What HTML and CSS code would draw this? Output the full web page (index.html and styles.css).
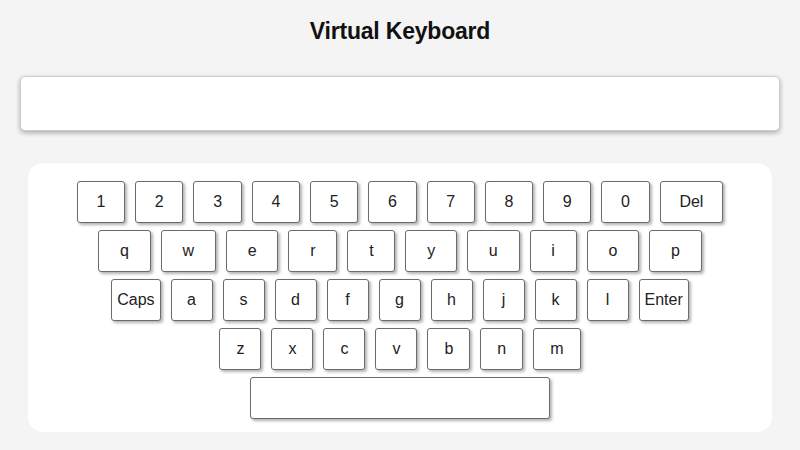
FILE: index.html
```html
<!DOCTYPE html>
<html lang="en">
<head>
  <meta charset="UTF-8" />
  <meta name="viewport" content="width=device-width, initial-scale=1" />
  <title>Virtual Keyboard</title>
  <link rel="stylesheet" href="styles.css">
</head>
<body>

<h1>Virtual Keyboard</h1>

<textarea id="output" class="output" readonly></textarea>

<div class="keyboard">
  <div class="row row-digits">
    <button class="key">1</button>
    <button class="key">2</button>
    <button class="key">3</button>
    <button class="key">4</button>
    <button class="key">5</button>
    <button class="key">6</button>
    <button class="key">7</button>
    <button class="key">8</button>
    <button class="key">9</button>
    <button class="key">0</button>
    <button class="key" data-action="del">Del</button>
  </div>
  <div class="row row-top">
    <button class="key">q</button>
    <button class="key">w</button>
    <button class="key">e</button>
    <button class="key">r</button>
    <button class="key">t</button>
    <button class="key">y</button>
    <button class="key">u</button>
    <button class="key">i</button>
    <button class="key">o</button>
    <button class="key">p</button>
  </div>
  <div class="row row-home">
    <button class="key" data-action="caps">Caps</button>
    <button class="key">a</button>
    <button class="key">s</button>
    <button class="key">d</button>
    <button class="key">f</button>
    <button class="key">g</button>
    <button class="key">h</button>
    <button class="key">j</button>
    <button class="key">k</button>
    <button class="key">l</button>
    <button class="key" data-action="enter">Enter</button>
  </div>
  <div class="row row-bottom">
    <button class="key">z</button>
    <button class="key">x</button>
    <button class="key">c</button>
    <button class="key">v</button>
    <button class="key">b</button>
    <button class="key">n</button>
    <button class="key">m</button>
  </div>
  <div class="row">
    <button class="key space" data-action="space"></button>
  </div>
</div>

<script>
  const output = document.getElementById("output");
  let caps = false;

  document.querySelectorAll(".key").forEach(key => {
    key.addEventListener("click", () => {
      const action = key.dataset.action;
      if (action === "del") {
        output.value = output.value.slice(0, -1);
      } else if (action === "caps") {
        caps = !caps;
      } else if (action === "enter") {
        output.value += "\n";
      } else if (action === "space") {
        output.value += " ";
      } else {
        const ch = key.textContent;
        output.value += caps ? ch.toUpperCase() : ch;
      }
    });
  });
</script>
</body>
</html>
```

FILE: styles.css
```css
body {
  margin: 0;
  padding: 0 20px;
  background: #f4f4f4;
  font-family: "Liberation Sans", Arial, sans-serif;
  color: #222;
}

h1 {
  font-size: 23px;
  text-align: center;
  margin: 18px 0 31px;
  letter-spacing: -0.2px;
  color: #111;
}

.output {
  display: block;
  box-sizing: border-box;
  width: 100%;
  height: 55px;
  border: 1px solid #ccc;
  border-radius: 5px;
  background: #fff;
  box-shadow: 0 2px 5px rgba(0, 0, 0, 0.3);
  resize: none;
  font-family: inherit;
  font-size: 16px;
  padding: 8px;
}

.keyboard {
  margin: 32px 8px 0;
  padding: 18px 0 13px;
  background: #fff;
  border-radius: 15px;
  display: flex;
  flex-direction: column;
  gap: 7px;
}

.row {
  display: flex;
  justify-content: center;
  gap: 10px;
}

.key {
  box-sizing: border-box;
  height: 42px;
  min-width: 42px;
  padding: 0 5px;
  background: #fff;
  border: 1px solid #6b6b6b;
  border-radius: 3px;
  box-shadow: 2px 2px 3px rgba(0, 0, 0, 0.3);
  font-family: inherit;
  font-size: 16px;
  color: #222;
  cursor: pointer;
}

.row-digits .key {
  padding: 0 18.7px;
}
.row-top .key {
  padding: 0 20.8px;
}
.row-bottom .key {
  padding: 0 16px;
}

.space {
  width: 300px;
}
```
